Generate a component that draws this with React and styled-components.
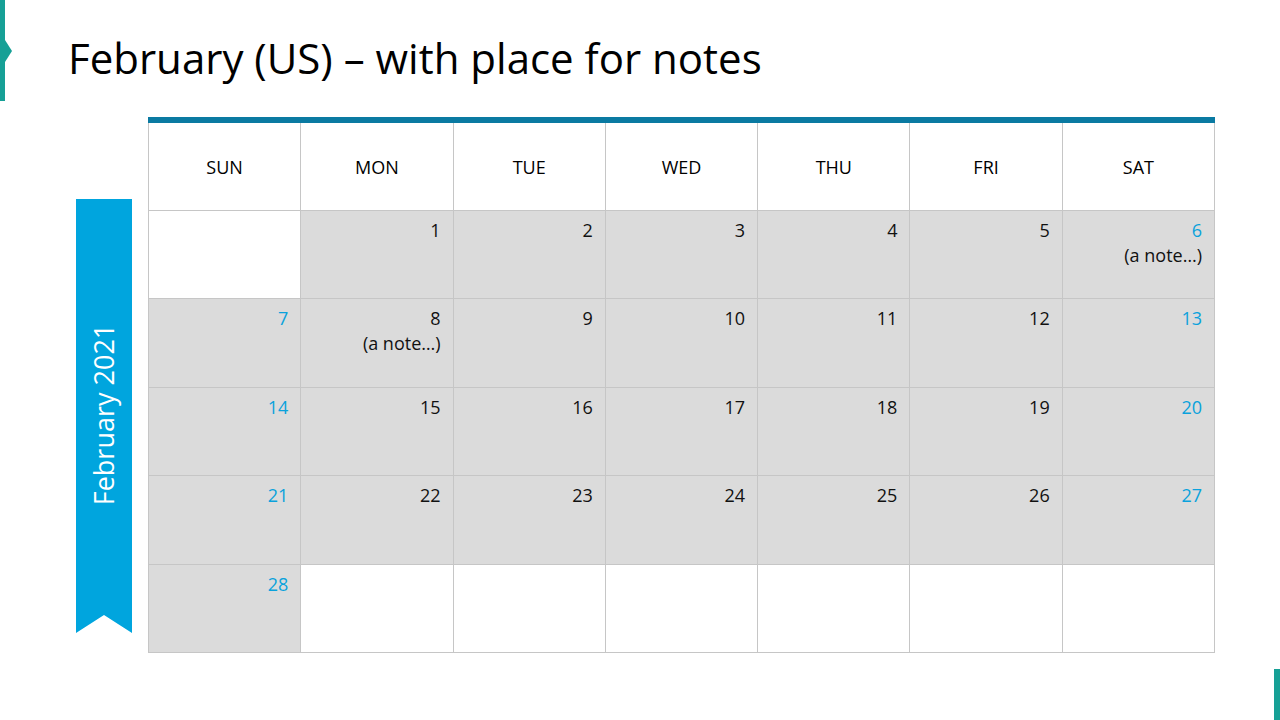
import React from 'react';
import styled, { createGlobalStyle } from 'styled-components';

const GlobalStyle = createGlobalStyle`
  html, body { margin: 0; padding: 0; }
  body { font-family: "Open Sans", "Noto Sans", sans-serif; background: #fff; }
`;

const Slide = styled.div`
  position: relative;
  width: 1280px;
  height: 720px;
  overflow: hidden;
  background: #fff;
`;

const EdgeMark = styled.div`
  position: absolute;
  left: 0;
  top: 0;
  width: 5px;
  height: 101px;
  background: #16a096;
  &::after {
    content: '';
    position: absolute;
    left: 5px;
    top: 40px;
    border-top: 11px solid transparent;
    border-bottom: 11px solid transparent;
    border-left: 7px solid #16a096;
  }
`;

const CornerMark = styled.div`
  position: absolute;
  right: 0;
  bottom: 0;
  width: 6px;
  height: 51px;
  background: #16a096;
`;

const Title = styled.h1`
  margin: 0;
  padding: 30px 0 0 68px;
  font-weight: 400;
  font-size: 42px;
  line-height: 56px;
  color: #000;
`;

const Body = styled.div`
  display: flex;
  align-items: flex-start;
  padding: 31px 0 0 76px;
`;

const Ribbon = styled.div`
  margin-top: 82px;
  width: 56px;
  height: 434px;
  background: #00a5de;
  clip-path: polygon(0 0, 100% 0, 100% 100%, 50% calc(100% - 18px), 0 100%);
  display: flex;
  align-items: center;
  justify-content: center;
`;

const RibbonText = styled.span`
  color: #fff;
  font-size: 27px;
  white-space: nowrap;
  transform: rotate(-90deg);
  margin-top: -4px;
`;

const Calendar = styled.div`
  margin-left: 16px;
  width: 1067px;
  border-top: 6px solid #0a7aa2;
`;

const Grid = styled.div`
  display: grid;
  grid-template-columns: repeat(7, 1fr);
  grid-template-rows: 87px repeat(5, 87.4px);
  gap: 1px;
  background: #c6c6c6;
  border: 1px solid #c6c6c6;
  border-top: none;
`;

const HeadCell = styled.div`
  background: #fff;
  display: flex;
  align-items: center;
  justify-content: center;
  font-size: 18px;
  color: #000;
`;

const DayCell = styled.div`
  background: ${p => (p.$filled ? '#dbdbdb' : '#fff')};
  padding: 7px 12px 0 0;
  text-align: right;
  font-size: 18px;
  line-height: 25px;
  color: #000;
`;

const DayNum = styled.div`
  color: ${p => (p.$weekend ? '#0aa2dc' : '#111')};
`;

const Note = styled.div`
  color: #111;
`;

const days = ['SUN', 'MON', 'TUE', 'WED', 'THU', 'FRI', 'SAT'];
const notes = { 6: true, 8: true };

export default function App() {
  const cells = [];
  for (let i = 0; i < 35; i++) {
    const d = i; // Feb 1 2021 is Monday
    const valid = d >= 1 && d <= 28;
    const col = i % 7;
    cells.push(
      <DayCell key={i} $filled={valid}>
        {valid && <DayNum $weekend={col === 0 || col === 6}>{d}</DayNum>}
        {valid && notes[d] && <Note>(a note…)</Note>}
      </DayCell>
    );
  }
  return (
    <Slide>
      <GlobalStyle />
      <EdgeMark />
      <CornerMark />
      <Title>February (US) – with place for notes</Title>
      <Body>
        <Ribbon>
          <RibbonText>February 2021</RibbonText>
        </Ribbon>
        <Calendar>
          <Grid>
            {days.map(d => (
              <HeadCell key={d}>{d}</HeadCell>
            ))}
            {cells}
          </Grid>
        </Calendar>
      </Body>
    </Slide>
  );
}
